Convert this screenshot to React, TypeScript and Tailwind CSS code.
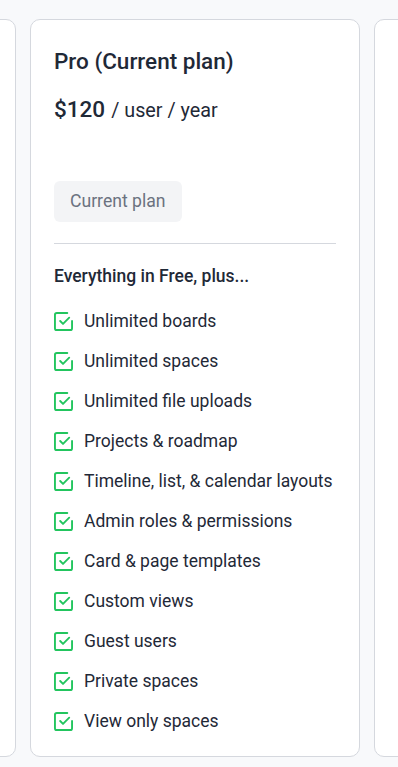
import React from 'react';

const features = [
  'Unlimited boards',
  'Unlimited spaces',
  'Unlimited file uploads',
  'Projects & roadmap',
  'Timeline, list, & calendar layouts',
  'Admin roles & permissions',
  'Card & page templates',
  'Custom views',
  'Guest users',
  'Private spaces',
  'View only spaces',
];

function CheckIcon() {
  return (
    <svg width="19" height="19" viewBox="2 2 20 20" fill="none" stroke="#22c55e" strokeWidth="2" strokeLinecap="round" strokeLinejoin="round" className="shrink-0">
      <path d="M21 11.5V19a2 2 0 0 1-2 2H5a2 2 0 0 1-2-2V5a2 2 0 0 1 2-2h11" />
      <path d="m8.5 11.5 3 3 6.5-6.5" />
    </svg>
  );
}

function SideCard() {
  return <div className="w-[330px] h-[738px] shrink-0 bg-white border border-[#d5d8de] rounded-[10px]" />;
}

export default function App() {
  return (
    <div className="w-[398px] h-[767px] overflow-hidden bg-[#f8f9fb]" style={{ fontFamily: 'Roboto, "Noto Sans", sans-serif' }}>
      <div className="flex gap-[14px] pt-[19px] ml-[-314px]">
        <SideCard />
        <div className="w-[330px] h-[738px] shrink-0 bg-white border border-[#d5d8de] rounded-[10px] px-[23px] pt-[26px]">
          <h2 className="text-[22.5px] leading-[30px] font-medium text-[#1f2937]">Pro (Current plan)</h2>
          <div className="mt-[18px] flex items-baseline gap-[6px] text-[#1f2937]">
            <span className="text-[22.5px] leading-[30px] font-medium">$120</span>
            <span className="text-[19.8px] leading-[30px]">/ user / year</span>
          </div>
          <button className="mt-[55px] h-[41px] px-4 rounded-md bg-[#f3f4f6] text-[17.6px] text-[#6b7280]">
            Current plan
          </button>
          <div className="mt-[21px] border-t border-[#d5d8de]" />
          <p className="mt-[19px] text-[17.5px] leading-[26px] font-medium text-[#1f2937]">Everything in Free, plus...</p>
          <ul className="mt-[19px] flex flex-col gap-[14px]">
            {features.map((f) => (
              <li key={f} className="flex items-center gap-[11px] text-[17.5px] leading-[26px] text-[#1f2937]">
                <CheckIcon />
                <span>{f}</span>
              </li>
            ))}
          </ul>
        </div>
        <SideCard />
      </div>
    </div>
  );
}
